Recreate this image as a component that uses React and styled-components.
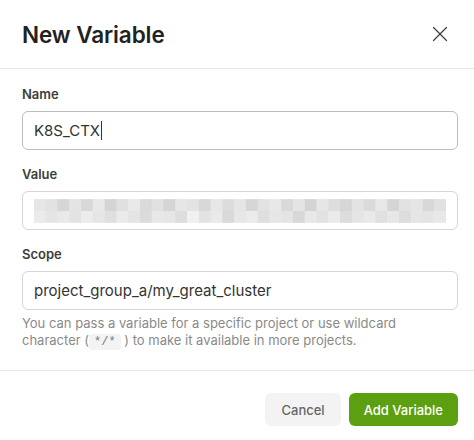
import styled, { createGlobalStyle } from 'styled-components';

const GlobalStyle = createGlobalStyle`
	* {
		box-sizing: border-box;
	}
	body {
		margin: 0;
		background: #fff;
		font-family: Inter, 'Noto Sans', sans-serif;
	}
`;

const redactShades = [
	['#e6e6e6', '#e2e2e2', '#d6d6d6', '#e4e4e4', '#d8d8d8', '#e8e8e8', '#d4d4d4', '#e0e0e0', '#e9e9e9', '#dadada', '#e1e1e1', '#d5d5d5', '#e6e6e6', '#e3e3e3', '#d8d8d8', '#e7e7e7', '#dcdcdc', '#e5e5e5', '#d6d6d6', '#e2e2e2', '#e8e8e8', '#d9d9d9', '#e4e4e4', '#d4d4d4', '#e6e6e6', '#dddddd', '#d6d6d6', '#e3e3e3', '#dadada', '#e7e7e7', '#d5d5d5', '#e2e2e2', '#e5e5e5', '#d8d8d8', '#e1e1e1'],
	['#ebebeb', '#e5e5e5', '#e9e9e9', '#e3e3e3', '#ececec', '#e6e6e6', '#dfdfdf', '#eaeaea', '#e4e4e4', '#dbdbdb', '#e8e8e8', '#e6e6e6', '#dddddd', '#f0f0f0', '#e3e3e3', '#e9e9e9', '#d9d9d9', '#e7e7e7', '#ebebeb', '#dedede', '#e6e6e6', '#e4e4e4', '#d8d8d8', '#e8e8e8', '#e2e2e2', '#eaeaea', '#dcdcdc', '#e5e5e5', '#e9e9e9', '#e0e0e0', '#e7e7e7', '#dddddd', '#e6e6e6', '#e4e4e4', '#e8e8e8'],
];

function Redacted() {
	const cell = 416 / redactShades[0].length;
	return (
		<svg width="416" height="24" viewBox="0 0 416 24">
			{redactShades.map((row, r) =>
				row.map((c, i) => (
					<rect key={r + '-' + i} x={i * cell} y={r * 12} width={cell + 0.5} height="12" fill={c} />
				))
			)}
		</svg>
	);
}

export default function App() {
	return (
		<>
			<GlobalStyle />
			<Dialog>
				<Header>
					<Title>New Variable</Title>
					<Close aria-label="Close">
						<svg width="16" height="16" viewBox="0 0 16 16">
							<path d="M1.5 1.5 L14.5 14.5 M14.5 1.5 L1.5 14.5" stroke="#3a3a3a" strokeWidth="1.2" strokeLinecap="round" />
						</svg>
					</Close>
				</Header>
				<Body>
					<Field>
						<Label>Name</Label>
						<Input $focused>
							K8S_CTX<Caret />
						</Input>
					</Field>
					<Field>
						<Label>Value</Label>
						<Input>
							<Redacted />
						</Input>
					</Field>
					<Field>
						<Label>Scope</Label>
						<Input>project_group_a/my_great_cluster</Input>
						<Help>
							You can pass a variable for a specific project or use wildcard character (
							<Code>*/*</Code> ) to make it available in more projects.
						</Help>
					</Field>
				</Body>
				<Footer>
					<Button>Cancel</Button>
					<Button $primary>Add Variable</Button>
				</Footer>
			</Dialog>
		</>
	);
}

const Dialog = styled.div`
	width: 474px;
	height: 440px;
	background: #fff;
	overflow: hidden;
`;

const Header = styled.header`
	display: flex;
	align-items: center;
	justify-content: space-between;
	height: 69px;
	padding: 0 26px 0 22px;
	border-bottom: 1px solid #e6e6e6;
`;

const Title = styled.h1`
	margin: 0;
	color: #222;
	font-size: 22.5px;
	font-weight: 600;
	letter-spacing: -0.1px;
`;

const Close = styled.button`
	display: flex;
	padding: 0;
	border: 0;
	background: none;
	cursor: pointer;
`;

const Body = styled.div`
	display: flex;
	flex-direction: column;
	gap: 16px;
	padding: 17px 16px 19px 22px;
`;

const Field = styled.div`
	display: flex;
	flex-direction: column;
`;

const Label = styled.label`
	margin-bottom: 9px;
	color: #3d3d3d;
	font-size: 13px;
	font-weight: 600;
	line-height: 16px;
`;

const Input = styled.div`
	display: flex;
	align-items: center;
	height: 39px;
	padding: 0 11px;
	border: 1px solid ${(p) => (p.$focused ? '#bdbdbd' : '#d6d6d6')};
	border-radius: 6px;
	color: #333;
	font-size: 15px;
`;

const Caret = styled.span`
	display: inline-block;
	width: 1px;
	height: 19px;
	margin-left: 1px;
	background: #333;
`;

const Help = styled.p`
	margin: 5px 0 0;
	color: #8a8a8a;
	font-size: 13px;
	line-height: 17px;
`;

const Code = styled.code`
	padding: 1px 5px;
	border-radius: 4px;
	background: #f3f3f3;
	color: #777;
	font-family: 'Liberation Mono', monospace;
	font-size: 12px;
`;

const Footer = styled.footer`
	display: flex;
	justify-content: flex-end;
	gap: 8px;
	padding: 22px 16px 0;
	border-top: 1px solid #e6e6e6;
`;

const Button = styled.button`
	height: 33px;
	padding: 0 ${(p) => (p.$primary ? '15px' : '16px')};
	border: 0;
	border-radius: 6px;
	background: ${(p) => (p.$primary ? '#5c9f10' : '#f3f3f3')};
	color: ${(p) => (p.$primary ? '#fff' : '#666')};
	font-family: Inter, 'Noto Sans', sans-serif;
	font-size: 13px;
	font-weight: 500;
`;
